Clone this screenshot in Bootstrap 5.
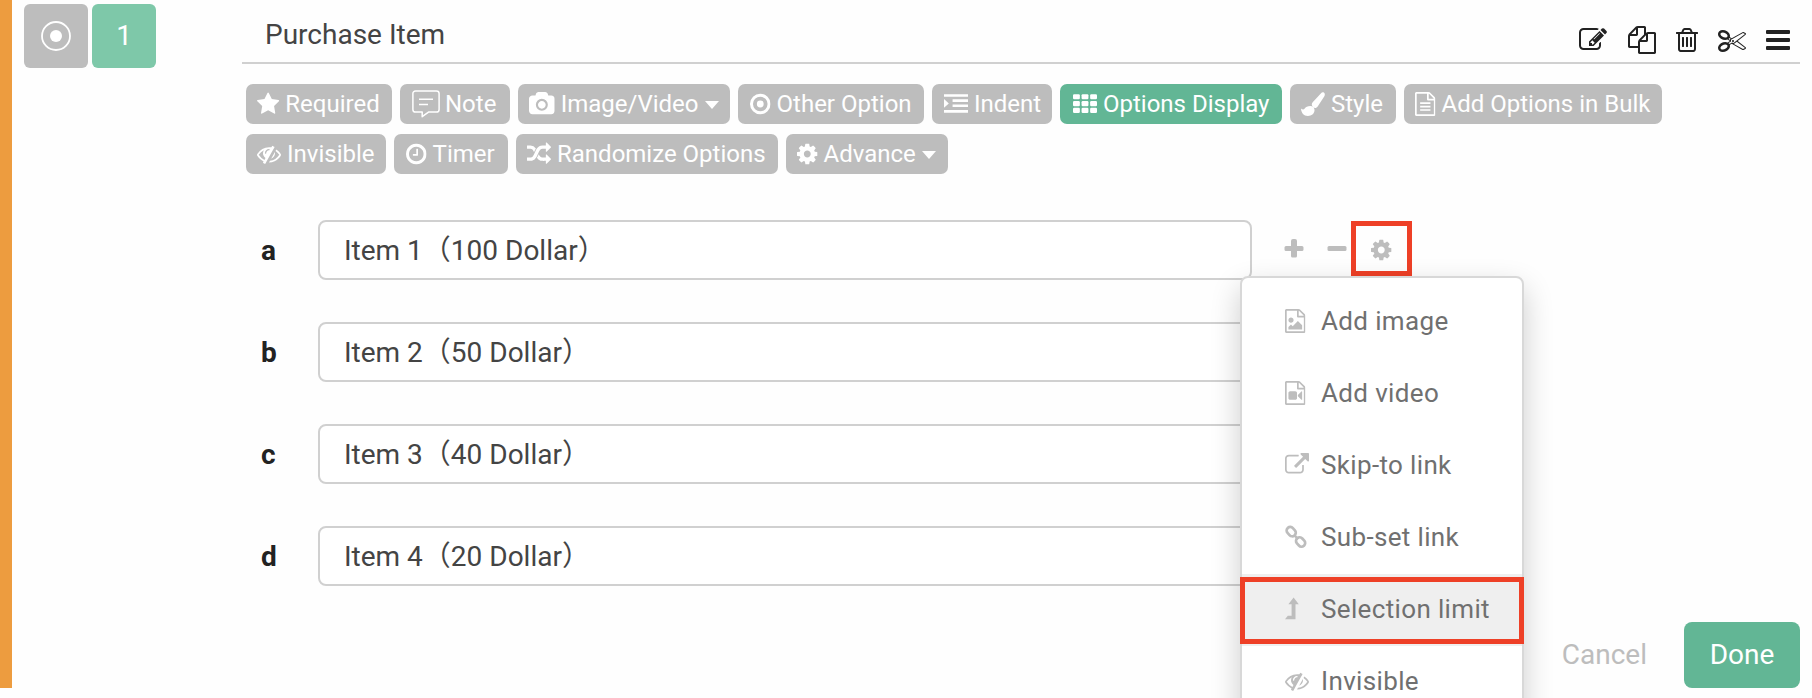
<!DOCTYPE html>
<html lang="en">
<head>
<meta charset="utf-8">
<meta name="viewport" content="width=device-width, initial-scale=1">
<title>Purchase Item</title>
<link href="https://cdn.jsdelivr.net/npm/bootstrap@5.3.0/dist/css/bootstrap.min.css" rel="stylesheet">
<style>
body{font-family:Roboto,"Noto Sans CJK SC",sans-serif;font-size:28px;line-height:1.2;color:#444;background:#fefefe;height:698px;overflow:hidden}
.accent{width:12px;height:688px;background:#ed9c3f}
.tile{width:64px;height:64px;border-radius:6px;color:#fff}
.tile-type{background:#bdbdbd}
.tile-num{background:#7ec8a9}
.badges{width:230px;padding:4px 0 0 12px;gap:4px}
.question{width:1558px}
.title-row{height:64px;border-bottom:2px solid #d0d0d0;padding:0 10px 0 22px}
.title-row h1{font-size:28px;line-height:34px;padding:18px 0 0 1px;font-weight:400}
.tools{color:#222;padding-top:26px}
.ico{height:24px;width:auto;fill:currentColor;flex:none;overflow:visible}
.tools .ico{height:28px}
.tools svg:nth-child(1){margin-right:21px}
.tools svg:nth-child(2){margin-right:20px}
.tools svg:nth-child(3){margin-right:20px}
.tools svg:nth-child(4){margin-right:20px}
.options-bar{padding:20px 0 0 4px;gap:10px 8px}
.opt{height:40px;padding:0 0 0 11px;gap:6px;border:0;border-radius:7px;background:#bdbdbd;color:#fff;font-size:24px;line-height:28px;white-space:nowrap;font-weight:400}
.opt .ico{margin-top:-1px}
.opt.is-on{background:#62b695;padding-left:13px}
.w-required{width:146px}.w-note{width:110px;padding-left:12px;gap:5px}.w-media{width:212px}.w-other{width:186px;padding-left:12px}
.w-indent{width:120px;padding-left:12px}.w-display{width:222px}.w-style{width:106px}.w-bulk{width:258px}
.w-hide{width:140px}.w-timer{width:114px;padding-left:12px}.w-random{width:262px}.w-adv{width:162px}
.tri{width:14px;height:8px;fill:currentColor;margin:1px 0 0 0}
.choices{padding-top:46px}
.choice{height:60px;margin-bottom:42px}
.choice:last-child{margin-bottom:36px}
.choice-key{width:76px;padding:2px 0 0 19px;color:#222;font-weight:700}
.choice-input{width:934px;height:60px;border:2px solid #d0d0d0;border-radius:8px;padding:2px 24px 0;background:#fff;color:#444;font-size:28px}
.row-tools{color:#bdbdbd;padding-left:32px}
.row-tools .ico{margin-top:2px}
.plus-gap{margin-right:23px}
.gear{width:61px;height:55px;border:5px solid #ee4027;margin:1px 0 0 4px}
.opt-menu{left:998px;top:56px;width:284px;padding:8px 0;border:2px solid #d8d8d8;border-radius:8px;background:#fff;box-shadow:0 12px 30px rgba(0,0,0,.2);z-index:5;--bs-dropdown-link-active-bg:#efefef}
.opt-menu .dropdown-item{height:72px;padding:0 0 2px 43px;font-size:26px;line-height:32px;color:#707070;letter-spacing:.35px}
.opt-menu .ico{color:#bdbdbd}
.ico-slot{width:36px}
.opt-menu .picked{background:#efefef}
.marker{left:-2px;top:299px;width:284px;height:67px;border:5px solid #ee4027}
.cancel{color:#bdbdbd;padding:0;border:0;font-size:28px;margin-right:37px}
.done{width:116px;height:66px;border:0;border-radius:8px;background:#62b695;color:#fff;font-size:28px;padding:0}
</style>
</head>
<body>
<svg class="d-none" xmlns="http://www.w3.org/2000/svg">
<symbol id="i-star" viewBox="64 0 1664 1792"><path d="M1728 647q0 22-26 48l-363 354 86 500q1 7 1 20 0 21-10.500 35.500t-30.500 14.500q-19 0-40-12l-449-236-449 236q-22 12-40 12-21 0-31.500-14.500t-10.500-35.500q0-6 2-20l86-500-364-354q-25-27-25-48 0-37 56-46l502-73 225-455q19-41 49-41t49 41l225 455 502 73q56 9 56 46z"/></symbol>
<symbol id="i-note" viewBox="0 0 28 28"><path d="M3.500 .9H24.500a2.600 2.600 0 0 1 2.600 2.600V19.500a2.600 2.600 0 0 1-2.600 2.600H16.500L10.200 26.700V22.100H3.500A2.600 2.600 0 0 1 .9 19.500V3.500A2.600 2.600 0 0 1 3.500 .9zM7 9.200H21M7 14.500H16" fill="none" stroke="currentColor" stroke-width="1.500" stroke-linejoin="round"/></symbol>
<symbol id="i-camera" viewBox="0 0 1920 1792"><path d="M960 672q119 0 203.500 84.500t84.500 203.500-84.500 203.500-203.500 84.500-203.500-84.500-84.500-203.500 84.500-203.500 203.500-84.500zm704-416q106 0 181 75t75 181v896q0 106-75 181t-181 75h-1408q-106 0-181-75t-75-181v-896q0-106 75-181t181-75h224l51-136q19-49 69.500-84.500t103.500-35.500h512q53 0 103.500 35.500t69.500 84.500l51 136h224zm-704 1152q185 0 316.500-131.500t131.500-316.500-131.500-316.500-316.500-131.500-316.500 131.500-131.500 316.500 131.500 316.500 316.500 131.500z"/></symbol>
<symbol id="i-dot" viewBox="128 0 1536 1792"><circle cx="896" cy="896" r="656" fill="none" stroke="currentColor" stroke-width="224"/><circle cx="896" cy="896" r="256"/></symbol>
<symbol id="i-indent" viewBox="0 0 1792 1792"><path d="M0 160h1792v200H0zM640 544h1152v200H640zM640 928h1152v200H640zM0 1344h1792v200H0zM0 520l360 330L0 1180z"/></symbol>
<symbol id="i-th" viewBox="0 0 1792 1792"><g id="throw"><rect y="160" width="512" height="384" rx="90"/><rect x="640" y="160" width="512" height="384" rx="90"/><rect x="1280" y="160" width="512" height="384" rx="90"/></g><use href="#throw" y="512"/><use href="#throw" y="1024"/></symbol>
<symbol id="i-brush" viewBox="0 0 24 24"><path d="M22.800 .6C24.200 1.500 24 3 23.200 4.500L17 14c-1.500 2.200-3.100 2.600-4.800 1.200s-2-3.200-.3-5.100L19.600 1.700C20.800 .4 21.900 .1 22.800 .6zM9.300 14.100c2.700.1 4.500 2 4.200 4.500-.4 3.300-2.900 5.400-6.600 5.400C2.700 24 .3 21.200 0 16.600c1.500 1.300 2.900 1.300 3.700 0 .9-1.500 3-2.500 5.600-2.500z"/></symbol>
<symbol id="i-page" viewBox="128 0 1536 1792"><path d="M1596 380q28 28 48 76t20 88v1152q0 40-28 68t-68 28h-1344q-40 0-68-28t-28-68v-1600q0-40 28-68t68-28h896q40 0 88 20t76 48zm-444-244v376h376q-10-29-22-41l-313-313q-12-12-41-22zm384 1528v-1024h-416q-40 0-68-28t-28-68v-416h-768v1536h1280z"/></symbol>
<symbol id="i-pagetext" viewBox="128 0 1536 1792"><use href="#i-page" x="128" y="0" width="1536" height="1792"/><path d="M512 768h768v128H512zM512 1024h768v128H512zM512 1280h768v128H512z"/></symbol>
<symbol id="i-pageimg" viewBox="128 0 1536 1792"><use href="#i-page" x="128" y="0" width="1536" height="1792"/><path d="M1408 1216v320h-1024v-192l192-192 128 128 384-384zm-832-192q-80 0-136-56t-56-136 56-136 136-56 136 56 56 136-56 136-136 56z"/></symbol>
<symbol id="i-pagevid" viewBox="128 0 1536 1792"><use href="#i-page" x="128" y="0" width="1536" height="1792"/><path d="M896 768q52 0 90 38t38 90v384q0 52-38 90t-90 38h-384q-52 0-90-38t-38-90v-384q0-52 38-90t90-38h384zm492 3q20 8 20 29v576q0 21-20 29-8 3-12 3-14 0-23-9l-265-266v-90l265-266q9-9 23-9 4 0 12 3z"/></symbol>
<symbol id="i-eye" viewBox="0 0 1792 1792"><path d="M555 1335l78-141q-87-63-136-159t-49-203q0-121 61-225-229 117-381 353 167 258 427 375zm389-759q0-20-14-34t-34-14q-125 0-214.500 89.500t-89.500 214.500q0 20 14 34t34 14 34-14 14-34q0-86 61-147t147-61q20 0 34-14t14-34zm363-191q0 7-1 9-106 189-316 567t-315 566l-49 89q-10 16-28 16-12 0-134-70-16-10-16-28 0-12 44-87-143-65-263.500-173t-208.500-245q-20-31-20-69t20-69q153-235 380-371t496-136q89 0 180 17l54-97q10-16 28-16 5 0 18 6t31 15.500 33 18.500 31.500 18.500 19.500 11.500q16 10 16 27zm37 447q0 139-79 253.500t-209 164.500l280-502q8 45 8 84zm448 128q0 35-20 69-39 64-109 145-150 172-347.500 267t-419.500 95l74-132q212-18 392.500-137t301.500-307q-115-179-282-294l63-112q95 64 182.500 153t144.500 184q20 34 20 69z"/></symbol>
<symbol id="i-clock" viewBox="128 0 1536 1792"><path d="M1024 544v448q0 14-9 23t-23 9h-320q-14 0-23-9t-9-23v-64q0-14 9-23t23-9h224v-352q0-14 9-23t23-9h64q14 0 23 9t9 23zm416 352q0-148-73-273t-198-198-273-73-273 73-198 198-73 273 73 273 198 198 273 73 273-73 198-198 73-273zm224 0q0 209-103 385.500t-279.500 279.500-385.500 103-385.500-103-279.500-279.500-103-385.500 103-385.500 279.500-279.500 385.500-103 385.500 103 279.500 279.500 103 385.500z"/></symbol>
<symbol id="i-random" viewBox="0 0 1792 1792"><path d="M666 481q-60 92-137 273-22-45-37-72.500t-40.500-63.500-51-56.500-63-35-81.500-14.500h-224q-14 0-23-9t-9-23v-192q0-14 9-23t23-9h224q250 0 410 225zm1126 799q0 14-9 23l-320 320q-9 9-23 9-13 0-22.500-9.500t-9.500-22.500v-192q-32 0-85 .5t-81 1-73-1-71-5-64-10.500-63-18.500-58-28.500-59-40-55-53.500-56-69.500q59-93 136-273 22 45 37 72.500t40.500 63.500 51 56.500 63 35 81.500 14.500h256v-192q0-14 9-23t23-9q12 0 24 10l319 319q9 9 9 23zm0-896q0 14-9 23l-320 320q-9 9-23 9-13 0-22.500-9.500t-9.500-22.500v-192h-256q-48 0-87 15t-69 45-51 61.500-45 77.500q-32 62-78 171-29 66-49.500 111t-54 105-64 100-74 83-90 68.500-106.500 42-128 16.500h-224q-14 0-23-9t-9-23v-192q0-14 9-23t23-9h224q48 0 87-15t69-45 51-61.500 45-77.500q32-62 78-171 29-66 49.500-111t54-105 64-100 74-83 90-68.500 106.500-42 128-16.500h256v-192q0-14 9-23t23-9q12 0 24 10l319 319q9 9 9 23z"/></symbol>
<symbol id="i-cog" viewBox="128 0 1536 1792"><path d="M1152 896q0-106-75-181t-181-75-181 75-75 181 75 181 181 75 181-75 75-181zm512-109v222q0 12-8 23t-20 13l-185 28q-19 54-39 91 35 50 107 138 10 12 10 25t-9 23q-27 37-99 108t-94 71q-12 0-26-9l-138-108q-44 23-91 38-16 136-29 186-7 28-36 28h-222q-14 0-24.500-8.500t-11.500-21.500l-28-184q-49-16-90-37l-141 107q-10 9-25 9-14 0-25-11-126-114-165-168-7-10-7-23 0-12 8-23 15-21 51-66.500t54-70.500q-27-50-41-99l-183-27q-13-2-21-12.500t-8-23.500v-222q0-12 8-23t19-13l186-28q14-46 39-92-40-57-107-138-10-12-10-24 0-10 9-23 26-36 98.500-107.500t94.500-71.500q13 0 26 10l138 107q44-23 91-38 16-136 29-186 7-28 36-28h222q14 0 24.500 8.500t11.500 21.500l28 184q49 16 90 37l142-107q9-9 24-9 13 0 25 10 129 119 165 170 7 8 7 22 0 12-8 23-15 21-51 66.500t-54 70.500q26 50 41 98l183 28q13 2 21 12.500t8 23.500z"/></symbol>
<symbol id="i-edit" viewBox="0 0 1792 1792"><path d="M888 1184l116-116-152-152-116 116v56h96v96h56zm440-720q-16-16-33 1l-350 350q-17 17-1 33t33-1l350-350q17-17 1-33zm80 594v190q0 119-84.500 203.500t-203.500 84.500h-832q-119 0-203.500-84.500t-84.500-203.500v-832q0-119 84.500-203.500t203.500-84.500h832q63 0 117 25 15 7 18 23 3 17-9 29l-49 49q-14 14-32 8-23-6-45-6h-832q-66 0-113 47t-47 113v832q0 66 47 113t113 47h832q66 0 113-47t47-113v-126q0-13 9-22l64-64q15-15 35-7t20 29zm-96-738l288 288-672 672h-288v-288zm444 132l-92 92-288-288 92-92q28-28 68-28t68 28l152 152q28 28 28 68t-28 68z"/></symbol>
<symbol id="i-files" viewBox="0 0 1792 1792"><path d="M1696 384q40 0 68 28t28 68v1216q0 40-28 68t-68 28h-960q-40 0-68-28t-28-68v-288h-544q-40 0-68-28t-28-68v-672q0-40 20-88t48-76l408-408q28-28 76-48t88-20h416q40 0 68 28t28 68v328q68-40 128-40h416zm-544 213l-299 299h299v-299zm-640-384l-299 299h299v-299zm196 647l316-316v-416h-384v416q0 40-28 68t-68 28h-416v640h512v-256q0-40 20-88t48-76zm956 804v-1152h-384v416q0 40-28 68t-68 28h-416v640h896z"/></symbol>
<symbol id="i-trash" viewBox="192 0 1408 1792"><path d="M704 736v576q0 14-9 23t-23 9h-64q-14 0-23-9t-9-23v-576q0-14 9-23t23-9h64q14 0 23 9t9 23zm256 0v576q0 14-9 23t-23 9h-64q-14 0-23-9t-9-23v-576q0-14 9-23t23-9h64q14 0 23 9t9 23zm256 0v576q0 14-9 23t-23 9h-64q-14 0-23-9t-9-23v-576q0-14 9-23t23-9h64q14 0 23 9t9 23zm128 724v-948h-896v948q0 22 7 40.500t14.500 27 10.500 8.500h832q3 0 10.500-8.500t14.500-27 7-40.500zm-672-1076h448l-48-117q-7-9-17-11h-317q-10 2-17 11zm928 32v64q0 14-9 23t-23 9h-96v948q0 83-47 143.500t-113 60.500h-832q-66 0-113-58.500t-47-141.500v-952h-96q-14 0-23-9t-9-23v-64q0-14 9-23t23-9h309l70-167q15-37 54-63t79-26h320q40 0 79 26t54 63l70 167h309q14 0 23 9t9 23z"/></symbol>
<symbol id="i-cut" viewBox="0 0 1792 1792"><path d="M960 896q26 0 45 19t19 45-19 45-45 19-45-19-19-45 19-45 45-19zm300 64l507 398q28 20 25 56-5 35-35 51l-128 64q-13 7-29 7-17 0-31-8l-690-387-110 66q-8 4-12 5 14 49 10 97-7 77-56 147.500t-132 123.500q-132 84-277 84-136 0-222-78-90-84-79-207 7-76 56-147t131-124q132-84 278-84 83 0 151 31 9-13 22-22l122-73-122-73q-13-9-22-22-68 31-151 31-146 0-278-84-82-53-131-124t-56-147q-5-59 15.500-113t63.500-93q85-79 222-79 145 0 277 84 83 52 132 123t56 148q4 48-10 97 4 1 12 5l110 66 690-387q14-8 31-8 16 0 29 7l128 64q30 16 35 51 3 36-25 56zm-681-260q46-42 21-108t-106-117q-92-59-192-59-74 0-113 36-46 42-21 108t106 117q92 59 192 59 74 0 113-36zm-85 745q81-51 106-117t-21-108q-39-36-113-36-100 0-192 59-81 51-106 117t21 108q39 36 113 36 100 0 192-59zm178-613l96 58v-11q0-36 33-56l14-8-79-44-26 26q-3 3-10 11t-12 12q-2 2-4 3.500t-3 2.500zm224 224l96 32 736-576-128-64-768 431v113l-160 96 9 8q2 2 7 6 4 4 11 12t11 12l26 26zm704 416l128-64-520-408-177 138q-2 3-13 7z"/></symbol>
<symbol id="i-bars" viewBox="128 0 1536 1792"><rect x="128" y="256" width="1536" height="256" rx="64"/><rect x="128" y="768" width="1536" height="256" rx="64"/><rect x="128" y="1280" width="1536" height="256" rx="64"/></symbol>
<symbol id="i-plus" viewBox="0 0 20 24"><path d="M9 2h2a2 2 0 0 1 2 2v5h5a1.500 1.500 0 0 1 1.500 1.500v2A1.500 1.500 0 0 1 18 14h-5v5a1.500 1.500 0 0 1-1.500 1.500h-3A1.500 1.500 0 0 1 7 19v-5H2a1.500 1.500 0 0 1-1.500-1.500v-2A1.500 1.500 0 0 1 2 9h5V4a2 2 0 0 1 2-2z"/></symbol>
<symbol id="i-minus" viewBox="0 0 20 24"><rect x=".5" y="9" width="19" height="5" rx="1.500"/></symbol>
<symbol id="i-out" viewBox="0 0 1792 1792"><path d="M1408 928v320q0 119-84.500 203.500t-203.500 84.500h-832q-119 0-203.500-84.500t-84.500-203.500v-832q0-119 84.500-203.500t203.500-84.500h704q14 0 23 9t9 23v64q0 14-9 23t-23 9h-704q-66 0-113 47t-47 113v832q0 66 47 113t113 47h832q66 0 113-47t47-113v-320q0-14 9-23t23-9h64q14 0 23 9t9 23zm384-864v512q0 26-19 45t-45 19-45-19l-176-176-652 652q-10 10-23 10t-23-10l-114-114q-10-10-10-23t10-23l652-652-176-176q-19-19-19-45t19-45 45-19h512q26 0 45 19t19 45z"/></symbol>
<symbol id="i-chain" viewBox="0 0 24 24"><g fill="none" stroke="currentColor" stroke-width="2.700"><rect x="-5" y="-3.600" width="10" height="7.200" rx="3.500" transform="translate(6.200 6.600) rotate(48)"/><rect x="-5" y="-3.600" width="10" height="7.200" rx="3.500" transform="translate(15.600 17) rotate(48)"/><path d="M9 9.800l4.200 4.400" stroke-width="2.400"/></g></symbol>
<symbol id="i-levelup" viewBox="0 0 24 24"><path d="M8.600 .5L13.800 7.200H10.500V22.300H0L2.800 18.800H6.600V7.200H3.400z"/></symbol>
</svg>

<div class="d-flex align-items-start">
  <div class="accent flex-shrink-0"></div>
  <aside class="badges d-flex flex-shrink-0">
    <div class="tile tile-type d-flex align-items-center justify-content-center">
      <svg width="30" height="30" viewBox="0 0 30 30"><circle cx="15" cy="15" r="14" fill="none" stroke="#fff" stroke-width="1.800"/><circle cx="15" cy="15" r="6" fill="#fff"/></svg>
    </div>
    <div class="tile tile-num d-flex align-items-center justify-content-center">1</div>
  </aside>

  <main class="question flex-shrink-0">
    <header class="title-row d-flex justify-content-between">
      <h1 class="m-0">Purchase Item</h1>
      <div class="tools d-flex align-items-start">
        <svg class="ico" viewBox="0 0 1792 1792"><use href="#i-edit"/></svg>
        <svg class="ico" viewBox="0 0 1792 1792"><use href="#i-files"/></svg>
        <svg class="ico" viewBox="0 0 1408 1792"><use href="#i-trash"/></svg>
        <svg class="ico" viewBox="0 0 1792 1792"><use href="#i-cut"/></svg>
        <svg class="ico" viewBox="0 0 1536 1792"><use href="#i-bars"/></svg>
      </div>
    </header>

    <div class="options-bar d-flex flex-wrap">
      <button class="opt w-required d-flex align-items-center"><svg class="ico" viewBox="0 0 1664 1792"><use href="#i-star"/></svg>Required</button>
      <button class="opt w-note d-flex align-items-center"><svg class="ico" viewBox="0 2 28 24"><use href="#i-note" width="28" height="28"/></svg>Note</button>
      <button class="opt w-media d-flex align-items-center"><svg class="ico" viewBox="0 0 1920 1792"><use href="#i-camera"/></svg>Image/Video<svg class="tri" viewBox="0 0 14 8"><path d="M0 0H14L7 8z"/></svg></button>
      <button class="opt w-other d-flex align-items-center"><svg class="ico" viewBox="0 0 1536 1792"><use href="#i-dot"/></svg>Other Option</button>
      <button class="opt w-indent d-flex align-items-center"><svg class="ico" viewBox="0 0 1792 1792"><use href="#i-indent"/></svg>Indent</button>
      <button class="opt is-on w-display d-flex align-items-center"><svg class="ico" viewBox="0 0 1792 1792"><use href="#i-th"/></svg>Options Display</button>
      <button class="opt w-style d-flex align-items-center"><svg class="ico" viewBox="0 0 24 24"><use href="#i-brush"/></svg>Style</button>
      <button class="opt w-bulk d-flex align-items-center"><svg class="ico" viewBox="0 0 1536 1792"><use href="#i-pagetext"/></svg>Add Options in Bulk</button>
      <button class="opt w-hide d-flex align-items-center"><svg class="ico" viewBox="0 0 1792 1792"><use href="#i-eye"/></svg>Invisible</button>
      <button class="opt w-timer d-flex align-items-center"><svg class="ico" viewBox="0 0 1536 1792"><use href="#i-clock"/></svg>Timer</button>
      <button class="opt w-random d-flex align-items-center"><svg class="ico" viewBox="0 0 1792 1792"><use href="#i-random"/></svg>Randomize Options</button>
      <button class="opt w-adv d-flex align-items-center"><svg class="ico" viewBox="0 0 1536 1792"><use href="#i-cog"/></svg>Advance<svg class="tri" viewBox="0 0 14 8"><path d="M0 0H14L7 8z"/></svg></button>
    </div>

    <div class="choices">
      <div class="choice d-flex align-items-center position-relative">
        <div class="choice-key">a</div>
        <div class="choice-input d-flex align-items-center">Item 1（100 Dollar）</div>
        <div class="row-tools d-flex align-items-center align-self-start">
          <svg class="ico plus-gap" viewBox="0 0 20 24"><use href="#i-plus"/></svg>
          <svg class="ico" viewBox="0 0 20 24"><use href="#i-minus"/></svg>
          <span class="gear d-flex align-items-center justify-content-center"><svg class="ico" viewBox="0 0 1536 1792"><use href="#i-cog"/></svg></span>
        </div>
        <div class="dropdown-menu show opt-menu">
          <a class="dropdown-item d-flex align-items-center"><span class="ico-slot d-flex"><svg class="ico" viewBox="0 0 1536 1792"><use href="#i-pageimg"/></svg></span>Add image</a>
          <a class="dropdown-item d-flex align-items-center"><span class="ico-slot d-flex"><svg class="ico" viewBox="0 0 1536 1792"><use href="#i-pagevid"/></svg></span>Add video</a>
          <a class="dropdown-item d-flex align-items-center"><span class="ico-slot d-flex"><svg class="ico" viewBox="0 0 1792 1792"><use href="#i-out"/></svg></span>Skip-to link</a>
          <a class="dropdown-item d-flex align-items-center"><span class="ico-slot d-flex"><svg class="ico" viewBox="0 0 24 24"><use href="#i-chain"/></svg></span>Sub-set link</a>
          <a class="dropdown-item picked d-flex align-items-center"><span class="ico-slot d-flex"><svg class="ico" viewBox="0 0 24 24"><use href="#i-levelup"/></svg></span>Selection limit</a>
          <a class="dropdown-item d-flex align-items-center"><span class="ico-slot d-flex"><svg class="ico" viewBox="0 0 1792 1792"><use href="#i-eye"/></svg></span>Invisible</a>
          <span class="marker position-absolute"></span>
        </div>
      </div>
      <div class="choice d-flex align-items-center">
        <div class="choice-key">b</div>
        <div class="choice-input d-flex align-items-center">Item 2（50 Dollar）</div>
      </div>
      <div class="choice d-flex align-items-center">
        <div class="choice-key">c</div>
        <div class="choice-input d-flex align-items-center">Item 3（40 Dollar）</div>
      </div>
      <div class="choice d-flex align-items-center">
        <div class="choice-key">d</div>
        <div class="choice-input d-flex align-items-center">Item 4（20 Dollar）</div>
      </div>
    </div>

    <footer class="d-flex justify-content-end align-items-center">
      <button class="btn cancel">Cancel</button>
      <button class="btn done">Done</button>
    </footer>
  </main>
</div>
<script src="https://cdn.jsdelivr.net/npm/bootstrap@5.3.0/dist/js/bootstrap.bundle.min.js"></script>
</body>
</html>
